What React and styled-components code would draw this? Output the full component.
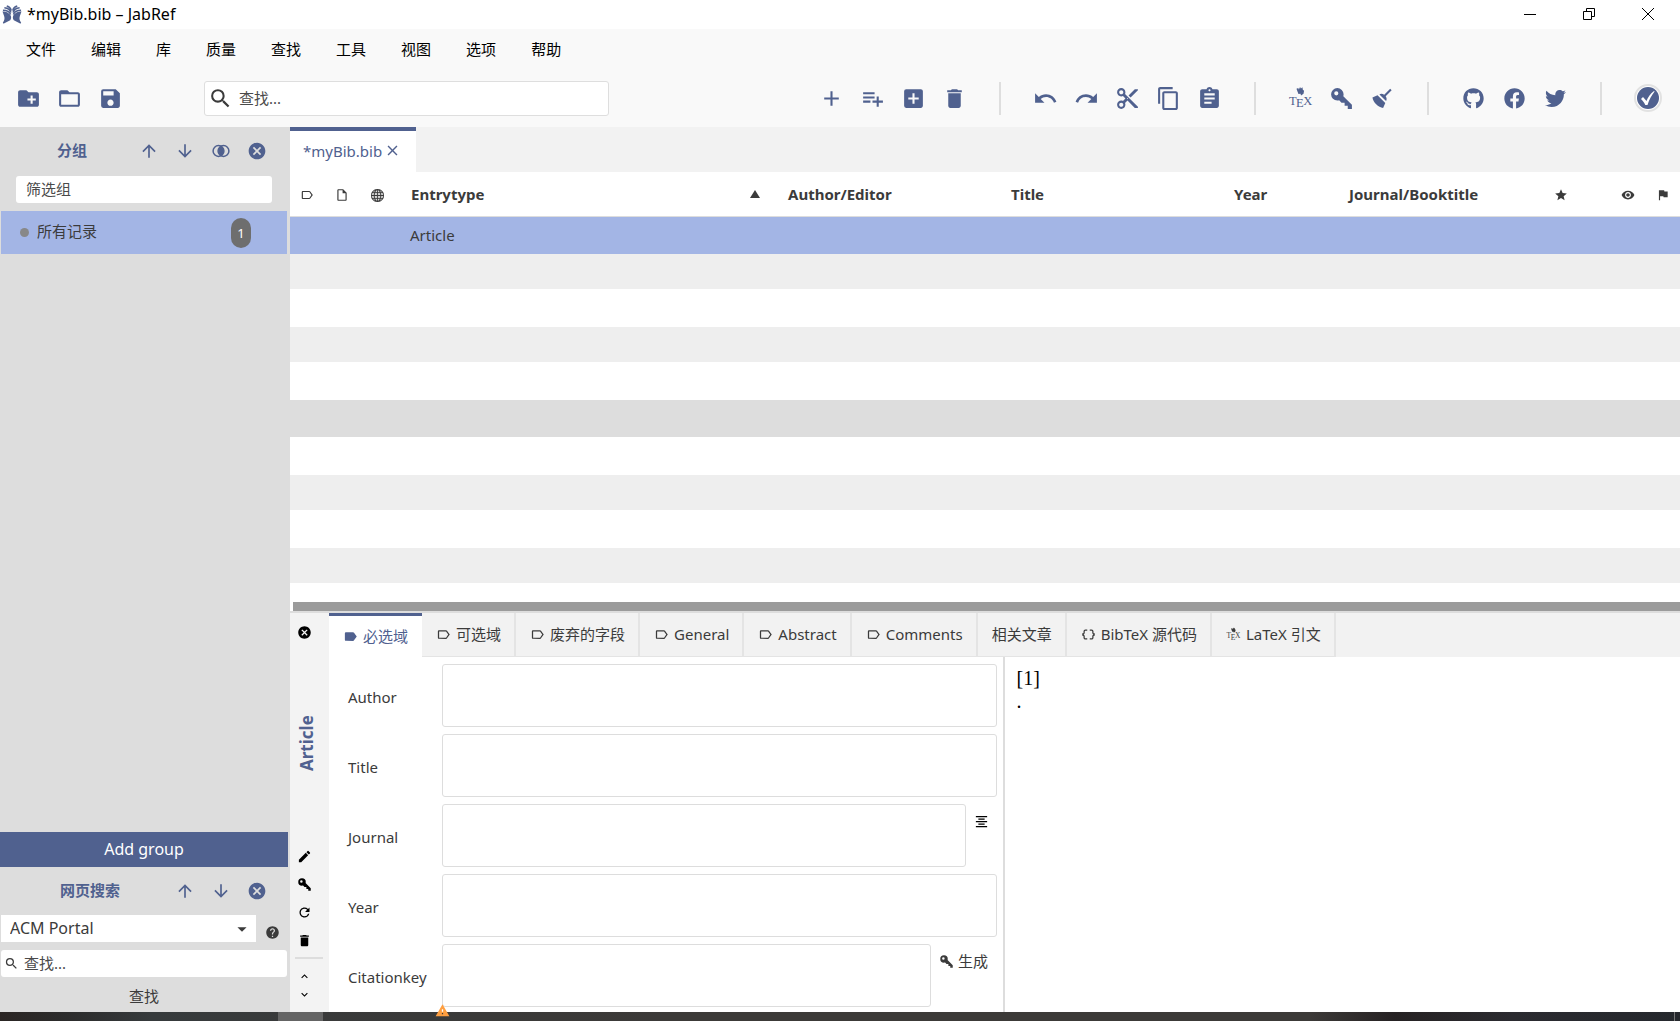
import React from 'react'
import styled, { createGlobalStyle } from 'styled-components'
import {
  MdAdd,
  MdAddBox,
  MdArrowDownward,
  MdArrowDropDown,
  MdArrowUpward,
  MdAssignment,
  MdCancel,
  MdClose,
  MdContentCopy,
  MdContentCut,
  MdCreateNewFolder,
  MdDataObject,
  MdDelete,
  MdEdit,
  MdExpandLess,
  MdExpandMore,
  MdFlag,
  MdFolderOpen,
  MdFormatAlignCenter,
  MdHelp,
  MdLabel,
  MdLabelOutline,
  MdOutlineInsertDriveFile,
  MdPlaylistAdd,
  MdRedo,
  MdRefresh,
  MdSave,
  MdSearch,
  MdStar,
  MdUndo,
  MdVisibility,
  MdWarning,
} from 'react-icons/md'
import { FaFacebook, FaGithub, FaTwitter } from 'react-icons/fa'
import { BsGlobe } from 'react-icons/bs'

const menus = ['文件', '编辑', '库', '质量', '查找', '工具', '视图', '选项', '帮助']

const columns = [
  { name: 'Entrytype', sorted: true },
  { name: 'Author/Editor', width: 223 },
  { name: 'Title', width: 223 },
  { name: 'Year', width: 115 },
  { name: 'Journal/Booktitle', width: 211 },
]

const emptyRows = ['odd', 'even', 'odd', 'even', 'hover', 'even', 'odd', 'even', 'odd']

const editorTabs = [
  { name: '必选域', icon: <MdLabel />, active: true },
  { name: '可选域', icon: <MdLabelOutline /> },
  { name: '废弃的字段', icon: <MdLabelOutline /> },
  { name: 'General', icon: <MdLabelOutline /> },
  { name: 'Abstract', icon: <MdLabelOutline /> },
  { name: 'Comments', icon: <MdLabelOutline /> },
  { name: '相关文章' },
  { name: 'BibTeX 源代码', icon: <MdDataObject /> },
  { name: 'LaTeX 引文', icon: <TexIcon /> },
]

function LogoWing() {
  return (
    <>
      <path d="M0.500 8C4 8 8 9.500 9.300 12.500c.6 1.500.2 3-.7 4.500l-6.600 3.500c-.8 0-1.200-.4-1-1.200 1.500-1.800 2-4 1.400-5.800-.4-1.600-1-3-1.900-5.500z" fill="#50618f" />
      <path
        d="M1 6.500c4 0 7 1.500 8 4.500M2.500 4c3.500.3 6 2 6.800 5M5 2c2.500.8 4.300 2.500 4.600 5"
        fill="none"
        stroke="#50618f"
        strokeWidth="1.700"
      />
    </>
  )
}

function LogoIcon() {
  return (
    <svg viewBox="0 0 21 21" width="20" height="20" aria-hidden="true">
      <LogoWing />
      <g transform="matrix(-1 0 0 1 21 0)">
        <LogoWing />
      </g>
    </svg>
  )
}

function KeyIcon() {
  return (
    <svg viewBox="0 0 24 24" width="1em" height="1em" fill="currentColor" aria-hidden="true">
      <path d="M22,18V22H18V19H15V16H12L9.74,13.74C9.19,13.91 8.61,14 8,14A6,6 0 0,1 2,8A6,6 0 0,1 8,2A6,6 0 0,1 14,8C14,8.61 13.91,9.19 13.74,9.74L22,18M7,5A2,2 0 0,0 5,7A2,2 0 0,0 7,9A2,2 0 0,0 9,7A2,2 0 0,0 7,5Z" />
    </svg>
  )
}

function BroomIcon() {
  return (
    <svg viewBox="0 0 24 24" width="1em" height="1em" fill="currentColor" aria-hidden="true">
      <path d="M19.36,2.72L20.78,4.14L15.06,9.85C16.13,11.39 16.28,13.24 15.38,14.44L9.06,8.12C10.26,7.22 12.11,7.37 13.65,8.44L19.36,2.72M5.93,17.57C3.92,15.56 2.69,13.16 2.35,10.92L7.23,8.83L14.67,16.27L12.58,21.15C10.34,20.81 7.94,19.58 5.93,17.57Z" />
    </svg>
  )
}

function TexIcon() {
  return (
    <svg viewBox="0 0 28 28" width="1em" height="1em" fill="currentColor" aria-hidden="true">
      <path d="M9.500 3l2-.8.600 1.800L13.500 1l1 1.800L16.200 1.500l.4 2.700 1.400 1-.6 3.400-2.800 1.900-.6-1.800-2.300.2L10.500 6z" />
      <g fontFamily="Liberation Serif, serif" fontSize="14">
        <text x="1" y="21">T</text>
        <text x="9" y="24">E</text>
        <text x="17" y="21">X</text>
      </g>
    </svg>
  )
}

function OverlapIcon() {
  return (
    <svg viewBox="0 0 24 24" width="1em" height="1em" fill="none" stroke="currentColor" strokeWidth="1.800" aria-hidden="true">
      <circle cx="9" cy="12" r="6.500" />
      <circle cx="15" cy="12" r="6.500" />
      <path d="M12 6.500c3 3 3 8 0 11-3-3-3-8 0-11z" fill="currentColor" />
    </svg>
  )
}

function ApprovedIcon() {
  return (
    <svg viewBox="0 0 28 28" width="28" height="28" aria-hidden="true">
      <circle cx="14" cy="14" r="13" fill="#fff" stroke="#e2e2e2" strokeWidth="2" />
      <circle cx="14" cy="14" r="11" fill="#50618f" />
      <path d="M7 15l2-2 3.500 4C14 13 16 10 20 7l.6.6C17.500 11.500 15.500 15 13.500 21h-2.200C10.500 19 9 17 7 15z" fill="#fff" />
    </svg>
  )
}

function WindowIcon({ kind }) {
  return (
    <svg viewBox="0 0 14 14" width="14" height="14" fill="none" stroke="#000" aria-hidden="true">
      {kind === 'minimize' && <path d="M1 7.500h12" />}
      {kind === 'restore' && <path d="M1.500 4.500h8v8h-8zM4.500 4.500v-3h8v8h-3" />}
      {kind === 'close' && <path d="M1 1l12 12M13 1L1 13" />}
    </svg>
  )
}

function Field({ label, children }) {
  const id = `field-${label.toLowerCase()}`
  return (
    <FieldRow>
      <FieldLabel htmlFor={id}>{label}</FieldLabel>
      <FieldInput id={id} />
      {children}
    </FieldRow>
  )
}

function App() {
  return (
    <Window>
      <GlobalStyle />
      <TitleBar>
        <LogoIcon />
        <WindowTitle>*myBib.bib – JabRef</WindowTitle>
        <WindowButton aria-label="Minimize"><WindowIcon kind="minimize" /></WindowButton>
        <WindowButton aria-label="Restore"><WindowIcon kind="restore" /></WindowButton>
        <WindowButton aria-label="Close"><WindowIcon kind="close" /></WindowButton>
      </TitleBar>
      <MenuBar>
        {menus.map((menu) => <MenuItem key={menu}>{menu}</MenuItem>)}
      </MenuBar>
      <Toolbar>
        <ToolGroup>
          <ToolButton aria-label="New library"><MdCreateNewFolder /></ToolButton>
          <ToolButton aria-label="Open library"><MdFolderOpen /></ToolButton>
          <ToolButton aria-label="Save library"><MdSave /></ToolButton>
        </ToolGroup>
        <SearchBox>
          <MdSearch />
          <SearchInput aria-label="Search" placeholder="查找..." />
        </SearchBox>
        <ToolGroup $end>
          <ToolButton aria-label="New article"><MdAdd /></ToolButton>
          <ToolButton aria-label="New entry"><MdPlaylistAdd /></ToolButton>
          <ToolButton aria-label="New entry from text"><MdAddBox /></ToolButton>
          <ToolButton aria-label="Delete entry"><MdDelete /></ToolButton>
          <Separator />
          <ToolButton aria-label="Undo"><MdUndo /></ToolButton>
          <ToolButton aria-label="Redo"><MdRedo /></ToolButton>
          <ToolButton aria-label="Cut"><MdContentCut /></ToolButton>
          <ToolButton aria-label="Copy"><MdContentCopy /></ToolButton>
          <ToolButton aria-label="Paste"><MdAssignment /></ToolButton>
          <Separator />
          <ToolButton aria-label="Push to TeX editor"><TexIcon /></ToolButton>
          <ToolButton aria-label="Generate citation key"><KeyIcon /></ToolButton>
          <ToolButton aria-label="Cleanup entries"><BroomIcon /></ToolButton>
          <Separator />
          <ToolButton aria-label="GitHub"><SocialIcon as={FaGithub} /></ToolButton>
          <ToolButton aria-label="Facebook"><SocialIcon as={FaFacebook} /></ToolButton>
          <ToolButton aria-label="Twitter"><SocialIcon as={FaTwitter} /></ToolButton>
          <Separator />
          <TaskButton aria-label="Background tasks"><ApprovedIcon /></TaskButton>
        </ToolGroup>
      </Toolbar>

      <Workspace>
        <SidePane>
          <PaneHeader>
            <PaneTitle>分组</PaneTitle>
            <PaneButton aria-label="Move up"><MdArrowUpward /></PaneButton>
            <PaneButton aria-label="Move down"><MdArrowDownward /></PaneButton>
            <PaneButton aria-label="Toggle intersection"><OverlapIcon /></PaneButton>
            <PaneButton aria-label="Hide groups"><MdCancel /></PaneButton>
          </PaneHeader>
          <FilterInput aria-label="Filter groups" placeholder="筛选组" />
          <GroupRow>
            <Bullet />
            <GroupName>所有记录</GroupName>
            <Badge>1</Badge>
          </GroupRow>
          <AddGroup>Add group</AddGroup>
          <PaneHeader>
            <PaneTitle>网页搜索</PaneTitle>
            <PaneButton aria-label="Move up"><MdArrowUpward /></PaneButton>
            <PaneButton aria-label="Move down"><MdArrowDownward /></PaneButton>
            <PaneButton aria-label="Hide web search"><MdCancel /></PaneButton>
          </PaneHeader>
          <FetcherRow>
            <SelectBox>
              <FetcherSelect aria-label="Fetcher">
                <option>ACM Portal</option>
              </FetcherSelect>
              <MdArrowDropDown />
            </SelectBox>
            <HelpButton aria-label="Help"><MdHelp /></HelpButton>
          </FetcherRow>
          <WebSearchBox>
            <MdSearch />
            <SearchInput aria-label="Web search" placeholder="查找..." />
          </WebSearchBox>
          <WebSearchButton>查找</WebSearchButton>
        </SidePane>

        <Main>
          <LibraryTabs>
            <LibraryTab>
              *myBib.bib
              <TabClose aria-label="Close library"><MdClose /></TabClose>
            </LibraryTab>
          </LibraryTabs>
          <TableArea>
            <EntryTable>
              <colgroup>
                <col width="34" />
                <col width="35" />
                <col width="36" />
                {columns.map((column) => <col key={column.name} width={column.width} />)}
                <col width="34" />
                <col width="33" />
                <col width="34" />
                <col width="35" />
              </colgroup>
              <thead>
                <tr>
                  <IconHead><MdLabelOutline /></IconHead>
                  <IconHead><MdOutlineInsertDriveFile /></IconHead>
                  <IconHead><GlobeIcon /></IconHead>
                  {columns.map((column) => (
                    <TextHead key={column.name}>
                      <HeadContent>
                        {column.name}
                        {column.sorted && <SortMark />}
                      </HeadContent>
                    </TextHead>
                  ))}
                  <IconHead><MdStar /></IconHead>
                  <IconHead />
                  <IconHead><MdVisibility /></IconHead>
                  <IconHead><MdFlag /></IconHead>
                </tr>
              </thead>
              <tbody>
                <EntryRow $kind="selected">
                  <td colSpan={3} />
                  <EntryCell>Article</EntryCell>
                  <td colSpan={8} />
                </EntryRow>
                {emptyRows.map((kind, index) => (
                  <EntryRow key={index} $kind={kind}>
                    <td colSpan={12} />
                  </EntryRow>
                ))}
              </tbody>
            </EntryTable>
          </TableArea>
          <ScrollTrack><ScrollThumb /></ScrollTrack>

          <Editor>
            <EditorStrip>
              <StripButton aria-label="Close editor"><MdCancel /></StripButton>
              <EntryType>Article</EntryType>
              <StripButton aria-label="Change entry type"><MdEdit /></StripButton>
              <StripButton aria-label="Generate key"><KeyIcon /></StripButton>
              <StripButton aria-label="Update"><MdRefresh /></StripButton>
              <StripButton aria-label="Delete"><MdDelete /></StripButton>
              <StripLine />
              <StripButton $small aria-label="Previous entry"><MdExpandLess /></StripButton>
              <StripButton $small aria-label="Next entry"><MdExpandMore /></StripButton>
            </EditorStrip>
            <EditorBody>
              <EditorTabs>
                {editorTabs.map((tab) => (
                  <EditorTab key={tab.name} $active={tab.active}>
                    {tab.icon}
                    {tab.name}
                  </EditorTab>
                ))}
              </EditorTabs>
              <EditorPanes>
                <FieldList>
                  <Field label="Author" />
                  <Field label="Title" />
                  <Field label="Journal">
                    <FieldButton aria-label="Toggle abbreviation"><AbbreviationIcon /></FieldButton>
                  </Field>
                  <Field label="Year" />
                  <Field label="Citationkey">
                    <FieldButton $wide><KeyIcon />生成</FieldButton>
                    <WarningMark><MdWarning /></WarningMark>
                  </Field>
                </FieldList>
                <Preview>
                  <div>[1]</div>
                  <div>.</div>
                </Preview>
              </EditorPanes>
            </EditorBody>
          </Editor>
        </Main>
      </Workspace>
      <Taskbar>
        <TaskbarItem />
        <TaskbarEdge />
      </Taskbar>
    </Window>
  )
}

export default App

const GlobalStyle = createGlobalStyle`
  * {
    box-sizing: border-box;
  }
  body {
    margin: 0;
    color: #3b3b3b;
    font-family: 'Noto Sans', 'Noto Sans CJK SC', sans-serif;
    font-size: 15px;
    line-height: 20px;
  }
  button, input, select, textarea {
    margin: 0;
    padding: 0;
    border: none;
    background: none;
    color: inherit;
    font: inherit;
    outline: none;
  }
  button svg {
    display: block;
  }
  input::placeholder {
    color: #4a4a4a;
    opacity: 1;
  }
`
const Window = styled.div`
  height: 100vh;
  display: flex;
  flex-direction: column;
  overflow: hidden;
`
const TitleBar = styled.header`
  height: 29px;
  flex-shrink: 0;
  display: flex;
  align-items: center;
  padding: 0 0 2px 2px;
  background: #fff;
  color: #000;
`
const WindowTitle = styled.span`
  flex: 1;
  padding-left: 5px;
  font-size: 16px;
`
const WindowButton = styled.button`
  width: 59px;
  height: 27px;
  display: flex;
  align-items: center;
  justify-content: center;
  &:last-child {
    margin-right: 3px;
  }
`
const MenuBar = styled.nav`
  height: 42px;
  flex-shrink: 0;
  display: flex;
  align-items: center;
  gap: 35px;
  padding: 0 0 2px 26px;
  background: #f9f9f9;
`
const MenuItem = styled.button`
  color: #000;
`
const Toolbar = styled.div`
  height: 56px;
  flex-shrink: 0;
  display: grid;
  grid-template-columns: 196px 2fr 1fr auto;
  align-items: center;
  padding: 0 9px 2px 8px;
  background: #f9f9f9;
`
const ToolGroup = styled.div`
  display: flex;
  align-items: center;
  grid-column: ${({ $end }) => ($end ? 4 : 1)};
`
const ToolButton = styled.button`
  width: 41px;
  height: 34px;
  display: flex;
  align-items: center;
  justify-content: center;
  color: #50618f;
  font-size: 25px;
`
const TaskButton = styled(ToolButton)`
  width: 45px;
`
const SocialIcon = styled.svg`
  width: 21px;
  height: 21px;
`
const Separator = styled.div`
  width: 2px;
  height: 33px;
  margin: 0 24px;
  background: #dedede;
`
const SearchBox = styled.label`
  height: 35px;
  display: flex;
  align-items: center;
  gap: 6px;
  padding-left: 3px;
  border: 1px solid #dedede;
  border-radius: 3px;
  background: #fff;
  font-size: 25px;
`
const SearchInput = styled.input`
  flex: 1;
  min-width: 0;
  padding-bottom: 1px;
  font-size: 15px;
`
const Workspace = styled.div`
  flex: 1;
  min-height: 0;
  display: flex;
`
const SidePane = styled.aside`
  width: 290px;
  flex-shrink: 0;
  display: flex;
  flex-direction: column;
  padding-right: 2px;
  background: #ddd;
`
const PaneHeader = styled.div`
  height: 48px;
  flex-shrink: 0;
  display: flex;
  align-items: center;
  padding: 0 13px;
  color: #50618f;
`
const PaneTitle = styled.h2`
  flex: 1;
  margin: 0;
  padding-bottom: 2px;
  font-size: 15px;
  font-weight: 700;
  text-align: center;
`
const PaneButton = styled.button`
  width: 36px;
  display: flex;
  justify-content: center;
  font-size: 20px;
`
const FilterInput = styled.input`
  height: 27px;
  flex-shrink: 0;
  margin: 1px 16px 8px;
  padding: 0 10px 2px;
  border-radius: 3px;
  background: #fff;
`
const GroupRow = styled.div`
  height: 43px;
  display: flex;
  align-items: center;
  margin: 0 1px;
  padding: 0 36px 0 19px;
  background: #a3b5e5;
`
const Bullet = styled.span`
  width: 9px;
  height: 9px;
  border-radius: 50%;
  background: #888;
`
const GroupName = styled.span`
  flex: 1;
  padding: 0 0 3px 8px;
`
const Badge = styled.span`
  width: 20px;
  border-radius: 10px;
  background: #6e6e6e;
  color: #fff;
  font-size: 13px;
  line-height: 30px;
  text-align: center;
`
const AddGroup = styled.button`
  height: 35px;
  flex-shrink: 0;
  margin-top: auto;
  padding-bottom: 2px;
  background: #50618f;
  color: #fff;
  font-size: 16px;
`
const FetcherRow = styled.div`
  display: flex;
  align-items: flex-end;
  padding: 0 1px;
`
const SelectBox = styled.div`
  height: 27px;
  flex: 1;
  display: grid;
  align-items: center;
  background: #fff;
  > * {
    grid-area: 1 / 1;
  }
  svg {
    width: 22px;
    height: 22px;
    margin-right: 3px;
    justify-self: end;
    pointer-events: none;
  }
`
const FetcherSelect = styled.select`
  width: 100%;
  padding: 0 0 2px 9px;
  appearance: none;
  font-size: 16px;
`
const HelpButton = styled.button`
  width: 31px;
  display: flex;
  justify-content: center;
  padding: 4px 0 2px 2px;
  font-size: 15px;
`
const WebSearchBox = styled.label`
  height: 27px;
  display: flex;
  align-items: center;
  gap: 5px;
  margin: 8px 1px 0;
  padding-left: 3px;
  border-radius: 3px;
  background: #fff;
  font-size: 15px;
`
const WebSearchButton = styled.button`
  height: 35px;
  flex-shrink: 0;
  padding-top: 3px;
`
const Main = styled.main`
  flex: 1;
  min-width: 0;
  display: flex;
  flex-direction: column;
  background: #fff;
`
const LibraryTabs = styled.div`
  height: 45px;
  flex-shrink: 0;
  display: flex;
  background: #f2f2f2;
`
const LibraryTab = styled.div`
  display: flex;
  align-items: center;
  gap: 2px;
  padding: 0 15px 2px 13px;
  border-top: 4px solid #50618f;
  background: #fff;
  color: #50618f;
`
const TabClose = styled.button`
  font-size: 17px;
`
const TableArea = styled.div`
  flex: 1;
  min-height: 0;
  overflow: hidden;
`
const EntryTable = styled.table`
  width: 100%;
  border-collapse: separate;
  border-spacing: 0;
  table-layout: fixed;
  td, th {
    padding: 0;
  }
`
const IconHead = styled.th`
  height: 45px;
  border-bottom: 1px solid #ddd;
  font-size: 14px;
  text-align: center;
  svg {
    display: block;
    margin: 2px auto 0;
  }
`
const GlobeIcon = styled(BsGlobe)`
  width: 13px;
  height: 13px;
  stroke: currentColor;
  stroke-width: 0.4;
`
const TextHead = styled.th`
  border-bottom: 1px solid #ddd;
  text-align: left;
  font-weight: 700;
`
const HeadContent = styled.div`
  display: flex;
  align-items: center;
  justify-content: space-between;
  padding: 0 12px 0 16px;
`
const SortMark = styled.span`
  border: 5px solid transparent;
  border-top: none;
  border-bottom: 8px solid #3b3b3b;
`
const rowHeights = { selected: 37, hover: 37, odd: 35, even: 38 }
const rowColors = { selected: '#a3b5e5', hover: '#ddd', odd: '#eee', even: '#fff' }
const EntryRow = styled.tr`
  height: ${({ $kind }) => rowHeights[$kind]}px;
  background: ${({ $kind }) => rowColors[$kind]};
`
const EntryCell = styled.td`
  && {
    padding: 0 0 2px 15px;
  }
`
const ScrollTrack = styled.div`
  flex-shrink: 0;
  padding-left: 3px;
  border-bottom: 2px solid #ddd;
`
const ScrollThumb = styled.div`
  height: 9px;
  background: #9b9b9b;
`
const Editor = styled.section`
  flex-shrink: 0;
  display: flex;
`
const EditorStrip = styled.div`
  width: 39px;
  display: flex;
  flex-direction: column;
  padding: 5px 0 9px;
  background: #f3f3f3;
`
const StripButton = styled.button`
  width: 29px;
  height: ${({ $small }) => ($small ? 18 : 28)}px;
  display: flex;
  align-items: center;
  justify-content: center;
  color: #000;
  font-size: ${({ $small }) => ($small ? 13 : 15)}px;
`
const EntryType = styled.h3`
  flex: 1;
  margin: 0;
  padding: 2px 7px 0 6px;
  color: #50618f;
  font-size: 17px;
  font-weight: 700;
  line-height: 20px;
  text-align: center;
  writing-mode: vertical-rl;
  rotate: 180deg;
`
const StripLine = styled.div`
  height: 2px;
  margin: 3px 6px 8px 5px;
  background: #ddd;
`
const EditorBody = styled.div`
  flex: 1;
  min-width: 0;
`
const EditorTabs = styled.div`
  height: 44px;
  display: flex;
  background: #f2f2f2;
`
const EditorTab = styled.button`
  display: flex;
  align-items: center;
  gap: 5px;
  padding: ${({ $active }) => ($active ? '0 14px 2px' : '0 13px 2px 14px')};
  border-top: ${({ $active }) => ($active ? '3px solid #50618f' : 'none')};
  border-right: ${({ $active }) => ($active ? 'none' : '2px solid #e4e4e4')};
  border-bottom: ${({ $active }) => ($active ? 'none' : '1px solid #e4e4e4')};
  background: ${({ $active }) => ($active ? '#fff' : '#f2f2f2')};
  color: ${({ $active }) => ($active ? '#50618f' : '#3b3b3b')};
  white-space: nowrap;
  svg {
    width: 15px;
    height: 15px;
    margin-top: 2px;
  }
`
const EditorPanes = styled.div`
  display: flex;
`
const FieldList = styled.div`
  width: 50%;
  display: flex;
  flex-direction: column;
  gap: 7px;
  padding: 7px 6px 5px 19px;
  border-right: 2px solid #ddd;
`
const FieldRow = styled.div`
  position: relative;
  display: flex;
`
const FieldLabel = styled.label`
  width: 94px;
  flex-shrink: 0;
  padding-top: 23px;
`
const FieldInput = styled.textarea`
  flex: 1;
  min-width: 0;
  height: 63px;
  padding: 8px;
  border: 1px solid #ddd;
  border-radius: 3px;
  resize: none;
`
const FieldButton = styled.button`
  width: ${({ $wide }) => ($wide ? 66 : 31)}px;
  height: 34px;
  display: flex;
  align-items: center;
  justify-content: center;
  gap: 4px;
  svg {
    width: 15px;
    height: 15px;
  }
`
const AbbreviationIcon = styled(MdFormatAlignCenter)`
  color: #000;
`
const WarningMark = styled.span`
  position: absolute;
  left: 87px;
  bottom: -11px;
  color: #ff9f40;
  font-size: 15px;
  line-height: 0;
`
const Preview = styled.article`
  flex: 1;
  padding: 10px 12px;
  color: #000;
  font-family: 'Liberation Serif', serif;
  font-size: 20px;
  line-height: 23px;
`
const Taskbar = styled.footer`
  height: 9px;
  flex-shrink: 0;
  display: flex;
  justify-content: space-between;
  padding: 0 5px 0 278px;
  background: linear-gradient(90deg, #2a2523 0, #2c2c2c 4%, #363a3c 9%, #393a3a 18%, #3c3a38 40%, #3c3a38 78%, #262223 83%, #2b2b30 90%, #25282d 100%);
`
const TaskbarItem = styled.div`
  width: 45px;
  background: #646464;
`
const TaskbarEdge = styled.div`
  width: 1px;
  background: #777;
`
